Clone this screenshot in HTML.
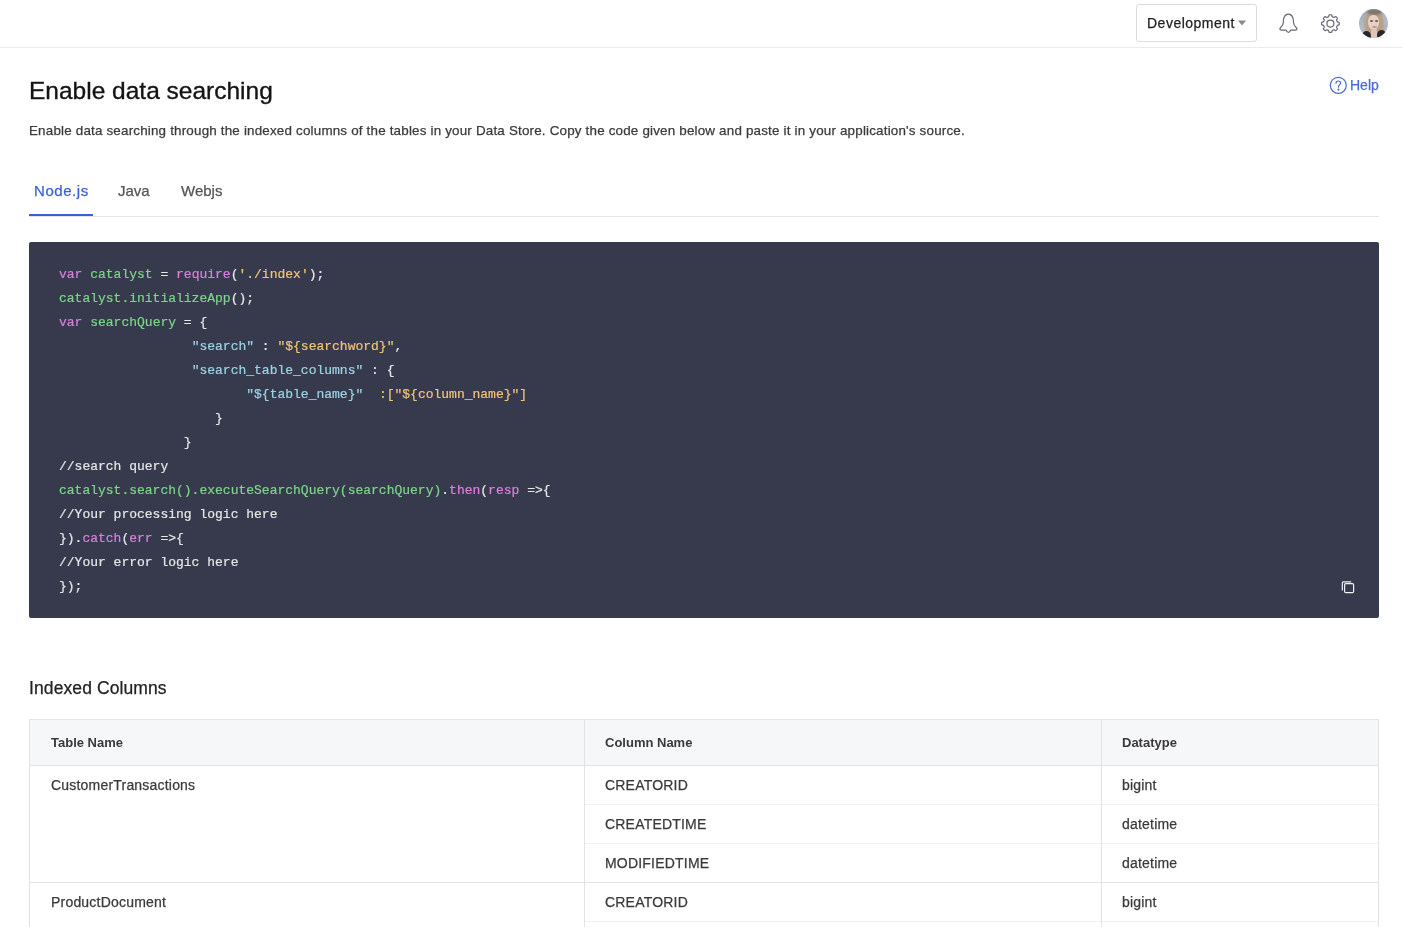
<!DOCTYPE html>
<html><head><meta charset="utf-8">
<style>
*{box-sizing:border-box;margin:0;padding:0}
html{background:#fff}
body{will-change:transform;background:transparent;}
html,body{width:1403px;height:927px;overflow:hidden;font-family:"Liberation Sans",sans-serif;color:#222}
.abs{position:absolute}
#title,#desc,#help,.tab,#sec,.td,#env span{-webkit-text-stroke:0.25px currentColor}
#title{-webkit-text-stroke:0.35px currentColor}
#hdr{position:absolute;left:0;top:0;width:1403px;height:48px;border-bottom:1px solid #ebebec;background:#fff}
#env{position:absolute;left:1136px;top:4px;width:121px;height:38px;border:1px solid #dcdce0;border-radius:3px;font-size:14px;color:#222}
#env span{position:absolute;left:10px;top:10px;white-space:nowrap;letter-spacing:0.5px}
#title{position:absolute;left:29px;top:77px;font-size:24.5px;color:#141414;white-space:nowrap}
#desc{position:absolute;left:29px;top:123px;font-size:13.4px;letter-spacing:0.19px;color:#3a3a3a;white-space:nowrap}
#help{position:absolute;left:1350px;top:77px;font-size:14px;color:#4a6bd6;white-space:nowrap}
.tab{position:absolute;top:182px;font-size:15px;white-space:nowrap;color:#555}
#tabline{position:absolute;left:29px;top:216px;width:1350px;height:1px;background:#e3e3e6}
#tabbar{position:absolute;left:29px;top:214px;width:64px;height:2px;background:#3b5fd6}
#code{position:absolute;left:29px;top:242px;width:1350px;height:376px;background:#373a4d;border-radius:2px}
pre{position:absolute;left:59px;top:263px;-webkit-text-stroke:0.2px;font-family:"Liberation Mono",monospace;font-size:13px;line-height:24px;color:#e6e6e6}
.k{color:#e07fe0}.g{color:#7dd68a}.s{color:#f0c674}.b{color:#9ed3e6}.w{color:#e8e8e8}
#sec{position:absolute;left:29px;top:678px;font-size:17.5px;letter-spacing:0.1px;color:#222;white-space:nowrap}
#tbl{position:absolute;left:29px;top:719px;width:1350px;height:300px;border:1px solid #e3e3e6;border-bottom:none}
#tbl>div{position:absolute}
.hd{background:#f6f7f9}
.th{font-size:13px;font-weight:bold;color:#3a3a3c;white-space:nowrap}
.td{font-size:14px;letter-spacing:0.2px;color:#3a3a3a;white-space:nowrap}
.hl{height:1px;background:#e3e3e6}
.hl2{height:1px;background:#f1f1f3}
.vl{top:0;width:1px;height:300px;background:#e3e3e6}
</style></head>
<body>
<div id="hdr"></div>
<div id="env"><span>Development</span></div>
<svg class="abs" style="left:1270px;top:5px" width="40" height="40" viewBox="1270 5 40 40" fill="none" stroke="#666973" stroke-width="1.2" stroke-linejoin="round"><path d="M1288.4 14.2C1286.5 14.2 1285 15.5 1284.2 17.1C1283.4 18.6 1283.3 20.5 1283.3 22.5C1283.3 24.6 1282.5 25.6 1280.8 27.2C1279.4 28.5 1279.6 30.1 1281.2 30.1H1286.3C1286.6 31.5 1287.4 32.3 1288.4 32.3C1289.4 32.3 1290.2 31.5 1290.5 30.1H1295.6C1297.2 30.1 1297.4 28.5 1296 27.2C1294.3 25.6 1293.5 24.6 1293.5 22.5C1293.5 20.5 1293.4 18.6 1292.6 17.1C1291.8 15.5 1290.3 14.2 1288.4 14.2Z"/></svg>
<svg class="abs" style="left:1310px;top:5px" width="40" height="40" viewBox="1310 5 40 40" fill="none" stroke="#666973" stroke-width="1.2" stroke-linejoin="round"><path d="M1339.25 23.60 L1339.25 23.75 L1339.24 23.91 L1339.24 24.06 L1339.22 24.22 L1339.21 24.37 L1339.18 24.52 L1339.14 24.67 L1339.06 24.82 L1338.93 24.95 L1338.68 25.06 L1338.30 25.14 L1337.89 25.19 L1337.57 25.26 L1337.38 25.34 L1337.28 25.44 L1337.21 25.55 L1337.16 25.67 L1337.11 25.78 L1337.07 25.90 L1337.03 26.01 L1336.98 26.13 L1336.94 26.24 L1336.89 26.35 L1336.84 26.47 L1336.79 26.58 L1336.74 26.69 L1336.69 26.80 L1336.64 26.92 L1336.59 27.03 L1336.56 27.16 L1336.57 27.31 L1336.64 27.50 L1336.82 27.77 L1337.07 28.10 L1337.29 28.42 L1337.38 28.67 L1337.39 28.87 L1337.34 29.02 L1337.26 29.16 L1337.17 29.28 L1337.08 29.40 L1336.98 29.52 L1336.87 29.64 L1336.77 29.75 L1336.66 29.86 L1336.55 29.97 L1336.44 30.07 L1336.32 30.18 L1336.20 30.28 L1336.08 30.37 L1335.96 30.46 L1335.82 30.54 L1335.67 30.59 L1335.47 30.58 L1335.22 30.49 L1334.90 30.27 L1334.57 30.02 L1334.30 29.84 L1334.11 29.77 L1333.96 29.76 L1333.83 29.79 L1333.72 29.84 L1333.60 29.89 L1333.49 29.94 L1333.38 29.99 L1333.27 30.04 L1333.15 30.09 L1333.04 30.14 L1332.93 30.18 L1332.81 30.23 L1332.70 30.27 L1332.58 30.31 L1332.47 30.36 L1332.35 30.41 L1332.24 30.48 L1332.14 30.58 L1332.06 30.77 L1331.99 31.09 L1331.94 31.50 L1331.86 31.88 L1331.75 32.13 L1331.62 32.26 L1331.47 32.34 L1331.32 32.38 L1331.17 32.41 L1331.02 32.42 L1330.86 32.44 L1330.71 32.44 L1330.55 32.45 L1330.40 32.45 L1330.25 32.45 L1330.09 32.44 L1329.94 32.44 L1329.78 32.42 L1329.63 32.41 L1329.48 32.38 L1329.33 32.34 L1329.18 32.26 L1329.05 32.13 L1328.94 31.88 L1328.86 31.50 L1328.81 31.09 L1328.74 30.77 L1328.66 30.58 L1328.56 30.48 L1328.45 30.41 L1328.33 30.36 L1328.22 30.31 L1328.10 30.27 L1327.99 30.23 L1327.87 30.18 L1327.76 30.14 L1327.65 30.09 L1327.53 30.04 L1327.42 29.99 L1327.31 29.94 L1327.20 29.89 L1327.08 29.84 L1326.97 29.79 L1326.84 29.76 L1326.69 29.77 L1326.50 29.84 L1326.23 30.02 L1325.90 30.27 L1325.58 30.49 L1325.33 30.58 L1325.13 30.59 L1324.98 30.54 L1324.84 30.46 L1324.72 30.37 L1324.60 30.28 L1324.48 30.18 L1324.36 30.07 L1324.25 29.97 L1324.14 29.86 L1324.03 29.75 L1323.93 29.64 L1323.82 29.52 L1323.72 29.40 L1323.63 29.28 L1323.54 29.16 L1323.46 29.02 L1323.41 28.87 L1323.42 28.67 L1323.51 28.42 L1323.73 28.10 L1323.98 27.77 L1324.16 27.50 L1324.23 27.31 L1324.24 27.16 L1324.21 27.03 L1324.16 26.92 L1324.11 26.80 L1324.06 26.69 L1324.01 26.58 L1323.96 26.47 L1323.91 26.35 L1323.86 26.24 L1323.82 26.13 L1323.77 26.01 L1323.73 25.90 L1323.69 25.78 L1323.64 25.67 L1323.59 25.55 L1323.52 25.44 L1323.42 25.34 L1323.23 25.26 L1322.91 25.19 L1322.50 25.14 L1322.12 25.06 L1321.87 24.95 L1321.74 24.82 L1321.66 24.67 L1321.62 24.52 L1321.59 24.37 L1321.58 24.22 L1321.56 24.06 L1321.56 23.91 L1321.55 23.75 L1321.55 23.60 L1321.55 23.45 L1321.56 23.29 L1321.56 23.14 L1321.58 22.98 L1321.59 22.83 L1321.62 22.68 L1321.66 22.53 L1321.74 22.38 L1321.87 22.25 L1322.12 22.14 L1322.50 22.06 L1322.91 22.01 L1323.23 21.94 L1323.42 21.86 L1323.52 21.76 L1323.59 21.65 L1323.64 21.53 L1323.69 21.42 L1323.73 21.30 L1323.77 21.19 L1323.82 21.07 L1323.86 20.96 L1323.91 20.85 L1323.96 20.73 L1324.01 20.62 L1324.06 20.51 L1324.11 20.40 L1324.16 20.28 L1324.21 20.17 L1324.24 20.04 L1324.23 19.89 L1324.16 19.70 L1323.98 19.43 L1323.73 19.10 L1323.51 18.78 L1323.42 18.53 L1323.41 18.33 L1323.46 18.18 L1323.54 18.04 L1323.63 17.92 L1323.72 17.80 L1323.82 17.68 L1323.93 17.56 L1324.03 17.45 L1324.14 17.34 L1324.25 17.23 L1324.36 17.13 L1324.48 17.02 L1324.60 16.92 L1324.72 16.83 L1324.84 16.74 L1324.98 16.66 L1325.13 16.61 L1325.33 16.62 L1325.58 16.71 L1325.90 16.93 L1326.23 17.18 L1326.50 17.36 L1326.69 17.43 L1326.84 17.44 L1326.97 17.41 L1327.08 17.36 L1327.20 17.31 L1327.31 17.26 L1327.42 17.21 L1327.53 17.16 L1327.65 17.11 L1327.76 17.06 L1327.87 17.02 L1327.99 16.97 L1328.10 16.93 L1328.22 16.89 L1328.33 16.84 L1328.45 16.79 L1328.56 16.72 L1328.66 16.62 L1328.74 16.43 L1328.81 16.11 L1328.86 15.70 L1328.94 15.32 L1329.05 15.07 L1329.18 14.94 L1329.33 14.86 L1329.48 14.82 L1329.63 14.79 L1329.78 14.78 L1329.94 14.76 L1330.09 14.76 L1330.25 14.75 L1330.40 14.75 L1330.55 14.75 L1330.71 14.76 L1330.86 14.76 L1331.02 14.78 L1331.17 14.79 L1331.32 14.82 L1331.47 14.86 L1331.62 14.94 L1331.75 15.07 L1331.86 15.32 L1331.94 15.70 L1331.99 16.11 L1332.06 16.43 L1332.14 16.62 L1332.24 16.72 L1332.35 16.79 L1332.47 16.84 L1332.58 16.89 L1332.70 16.93 L1332.81 16.97 L1332.93 17.02 L1333.04 17.06 L1333.15 17.11 L1333.27 17.16 L1333.38 17.21 L1333.49 17.26 L1333.60 17.31 L1333.72 17.36 L1333.83 17.41 L1333.96 17.44 L1334.11 17.43 L1334.30 17.36 L1334.57 17.18 L1334.90 16.93 L1335.22 16.71 L1335.47 16.62 L1335.67 16.61 L1335.82 16.66 L1335.96 16.74 L1336.08 16.83 L1336.20 16.92 L1336.32 17.02 L1336.44 17.13 L1336.55 17.23 L1336.66 17.34 L1336.77 17.45 L1336.87 17.56 L1336.98 17.68 L1337.08 17.80 L1337.17 17.92 L1337.26 18.04 L1337.34 18.18 L1337.39 18.33 L1337.38 18.53 L1337.29 18.78 L1337.07 19.10 L1336.82 19.43 L1336.64 19.70 L1336.57 19.89 L1336.56 20.04 L1336.59 20.17 L1336.64 20.28 L1336.69 20.40 L1336.74 20.51 L1336.79 20.62 L1336.84 20.73 L1336.89 20.85 L1336.94 20.96 L1336.98 21.07 L1337.03 21.19 L1337.07 21.30 L1337.11 21.42 L1337.16 21.53 L1337.21 21.65 L1337.28 21.76 L1337.38 21.86 L1337.57 21.94 L1337.89 22.01 L1338.30 22.06 L1338.68 22.14 L1338.93 22.25 L1339.06 22.38 L1339.14 22.53 L1339.18 22.68 L1339.21 22.83 L1339.22 22.98 L1339.24 23.14 L1339.24 23.29 L1339.25 23.45Z"/><circle cx="1330.4" cy="23.6" r="3.5"/></svg>
<div class="abs" style="left:1359px;top:9px;width:29px;height:29px;border-radius:50%;overflow:hidden;background:linear-gradient(160deg,#9aa6bb 0%,#b4bccb 50%,#aab3c4 100%)">
<div class="abs" style="left:5px;top:1px;width:20px;height:26px;border-radius:50% 50% 40% 40%;background:#b7a184;filter:blur(1px)"></div>
<div class="abs" style="left:8px;top:0px;width:15px;height:6px;border-radius:50%;background:#7d746c;filter:blur(1px)"></div>
<div class="abs" style="left:9px;top:6px;width:11px;height:15px;border-radius:45% 45% 50% 50%;background:#e6d0c6;filter:blur(0.6px)"></div>
<div class="abs" style="left:10.5px;top:11px;width:3px;height:1.5px;background:#6e5a56;border-radius:50%;filter:blur(0.3px)"></div>
<div class="abs" style="left:16px;top:11px;width:3px;height:1.5px;background:#6e5a56;border-radius:50%;filter:blur(0.3px)"></div>
<div class="abs" style="left:12.5px;top:16.5px;width:5px;height:2px;background:#c98f8c;border-radius:50%"></div>
<div class="abs" style="left:3px;top:22px;width:9px;height:10px;border-radius:50%;background:#2b2629;filter:blur(0.5px)"></div>
<div class="abs" style="left:18px;top:21px;width:9px;height:10px;border-radius:50%;background:#2b2629;filter:blur(0.5px)"></div>
<div class="abs" style="left:12px;top:20px;width:6px;height:10px;border-radius:30%;background:#dfc6bb;filter:blur(0.5px)"></div>
</div>
<svg class="abs" style="left:1238px;top:20px" width="8" height="6" viewBox="0 0 8 6"><path d="M0 0.5h8L4 5.5z" fill="#8a8a8e"/></svg>
<svg class="abs" style="left:1329px;top:76px" width="19" height="19" viewBox="0 0 19 19" fill="none" stroke="#4a6bd6" stroke-width="1.2"><circle cx="9.3" cy="9.3" r="8"/><path d="M7 7.3c0-1.4 1-2.3 2.3-2.3s2.3 0.9 2.3 2.1c0 1.6-2.1 1.7-2.1 3.5v0.6" stroke-linecap="round"/><circle cx="9.5" cy="13.6" r="0.5" fill="#4a6bd6"/></svg>
<div id="title">Enable data searching</div>
<div id="desc">Enable data searching through the indexed columns of the tables in your Data Store. Copy the code given below and paste it in your application's source.</div>
<div id="help">Help</div>
<div class="tab" style="left:34px;color:#3b5fd6;letter-spacing:0.55px">Node.js</div>
<div class="tab" style="left:118px">Java</div>
<div class="tab" style="left:181px">Webjs</div>
<div id="tabline"></div><div id="tabbar"></div>
<div id="code"></div>
<pre><span class="k">var</span> <span class="g">catalyst</span> = <span class="k">require</span>(<span class="s">'./index'</span>);
<span class="g">catalyst.initializeApp</span>();
<span class="k">var</span> <span class="g">searchQuery</span> = {
                 <span class="b">"search"</span> : <span class="s">"${searchword}"</span>,
                 <span class="b">"search_table_columns"</span> : {
                        <span class="b">"${table_name}"</span>  <span class="s">:["${column_name}"]</span>
                    }
                }
//search query
<span class="g">catalyst.search().executeSearchQuery(searchQuery)</span>.<span class="k">then</span>(<span class="k">resp</span> =&gt;{
//Your processing logic here
}).<span class="k">catch</span>(<span class="k">err</span> =&gt;{
//Your error logic here
});</pre>
<svg class="abs" style="left:1335px;top:575px" width="25" height="25" viewBox="1335 575 25 25" fill="none" stroke="#f2f2f4" stroke-width="1.2"><path d="M1342.3 590.5V582.9C1342.3 582.2 1342.7 581.8 1343.4 581.8H1351.2"/><rect x="1344.6" y="583.6" width="9" height="9" rx="1.2"/></svg>
<div id="sec">Indexed Columns</div>
<div id="tbl">
<div class="hd" style="left:0;top:0;width:1348px;height:45px"></div>
<div class="th" style="left:21px;top:15px">Table Name</div>
<div class="th" style="left:575px;top:15px">Column Name</div>
<div class="th" style="left:1092px;top:15px">Datatype</div>
<div class="hl" style="top:45px;left:0;width:1348px"></div>
<div class="hl2" style="top:84px;left:555px;width:793px"></div>
<div class="hl2" style="top:123px;left:555px;width:793px"></div>
<div class="hl" style="top:162px;left:0;width:1348px"></div>
<div class="hl2" style="top:201px;left:555px;width:793px"></div>
<div class="vl" style="left:554px"></div>
<div class="vl" style="left:1071px"></div>
<div class="td" style="left:21px;top:57px">CustomerTransactions</div>
<div class="td" style="left:575px;top:57px">CREATORID</div>
<div class="td" style="left:575px;top:96px">CREATEDTIME</div>
<div class="td" style="left:575px;top:135px">MODIFIEDTIME</div>
<div class="td" style="left:1092px;top:57px">bigint</div>
<div class="td" style="left:1092px;top:96px">datetime</div>
<div class="td" style="left:1092px;top:135px">datetime</div>
<div class="td" style="left:21px;top:174px">ProductDocument</div>
<div class="td" style="left:575px;top:174px">CREATORID</div>
<div class="td" style="left:1092px;top:174px">bigint</div>
</div>
</body></html>
